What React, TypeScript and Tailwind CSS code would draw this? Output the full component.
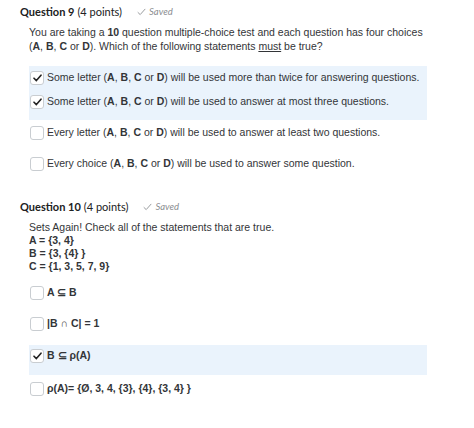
import React from "react";

const Check = ({ checked }: { checked: boolean }) => (
  <span className="inline-flex h-[14px] w-[14px] shrink-0 items-center justify-center rounded-[3px] border border-[#c9cdd1] bg-white">
    {checked && (
      <svg width="9" height="8" viewBox="0 0 9 8" fill="none">
        <path d="M1 4.2 L3.4 6.6 L8 1.2" stroke="#222" strokeWidth="1.6" strokeLinecap="round" strokeLinejoin="round" />
      </svg>
    )}
  </span>
);

const Opt = ({ checked, children, cls }: { checked: boolean; children: React.ReactNode; cls?: string }) => (
  <div className={"flex h-[22px] items-center gap-[3px] pl-[1px] " + (cls || "")}>
    <Check checked={checked} />
    <span className="whitespace-nowrap text-[10.5px] text-[#333538]">{children}</span>
  </div>
);

const Title = ({ n }: { n: string }) => (
  <div className="flex h-[24px] items-center pl-[20px] font-['Lato',sans-serif] text-[11px] text-[#202122]">
    <span className="font-bold">Question {n}</span>
    <span className="ml-[3px]">(4 points)</span>
    <span className="ml-[15px] flex items-center gap-[3px] text-[9.5px] italic text-[#8a8d90]">
      <svg width="9" height="8" viewBox="0 0 9 8" fill="none">
        <path d="M1 4.5 L3.2 6.6 L8 1.2" stroke="#9a9da0" strokeWidth="1" strokeLinecap="round" strokeLinejoin="round" />
      </svg>
      Saved
    </span>
  </div>
);

export default function App() {
  return (
    <div className="h-[428px] w-[474px] bg-white font-['Liberation_Sans',Arial,sans-serif] text-[#333538]">
      <Title n="9" />
      <div className="mt-[1px] whitespace-nowrap pl-[29px] text-[10.5px] leading-[14px]">
        <div>
          You are taking a <b>10</b> question multiple-choice test and each question has four choices
        </div>
        <div>
          (<b>A</b>, <b>B</b>, <b>C</b> or <b>D</b>). Which of the following statements <u>must</u> be true?
        </div>
      </div>
      <div className="ml-[29px] mt-[13px] w-[398px] bg-[#eaf3fc] pb-[7px] pt-[1px]">
        <div className="flex flex-col gap-[2px]">
          <Opt checked>
            Some letter (<b>A</b>, <b>B</b>, <b>C</b> or <b>D</b>) will be used more than twice for answering questions.
          </Opt>
          <Opt checked>
            Some letter (<b>A</b>, <b>B</b>, <b>C</b> or <b>D</b>) will be used to answer at most three questions.
          </Opt>
        </div>
      </div>
      <div className="ml-[29px] mt-[2px] flex flex-col gap-[9px]">
        <Opt checked={false}>
          Every letter (<b>A</b>, <b>B</b>, <b>C</b> or <b>D</b>) will be used to answer at least two questions.
        </Opt>
        <Opt checked={false}>
          Every choice (<b>A</b>, <b>B</b>, <b>C</b> or <b>D</b>) will be used to answer some question.
        </Opt>
      </div>

      <div className="mt-[20px]">
        <Title n="10" />
      </div>
      <div className="mt-[2px] whitespace-nowrap pl-[29px] text-[10.5px] leading-[13px]">
        <div>Sets Again! Check all of the statements that are true.</div>
        <div className="font-bold">A = {"{3, 4}"}</div>
        <div className="font-bold">B = {"{3, {4} }"}</div>
        <div className="font-bold">C = {"{1, 3, 5, 7, 9}"}</div>
      </div>
      <div className="ml-[29px] mt-[9px] flex flex-col gap-[9px]">
        <Opt checked={false}>
          <b>A ⊆ B</b>
        </Opt>
        <Opt checked={false}>
          <b>|B ∩ C| = 1</b>
        </Opt>
      </div>
      <div className="ml-[29px] mt-[10px] w-[398px] bg-[#eaf3fc] pb-[8px]">
        <Opt checked>
          <b>B ⊆ ρ(A)</b>
        </Opt>
      </div>
      <div className="ml-[29px] mt-[3px]">
        <Opt checked={false}>
          <b>ρ(A)= {"{Ø, 3, 4, {3}, {4}, {3, 4} }"}</b>
        </Opt>
      </div>
    </div>
  );
}
